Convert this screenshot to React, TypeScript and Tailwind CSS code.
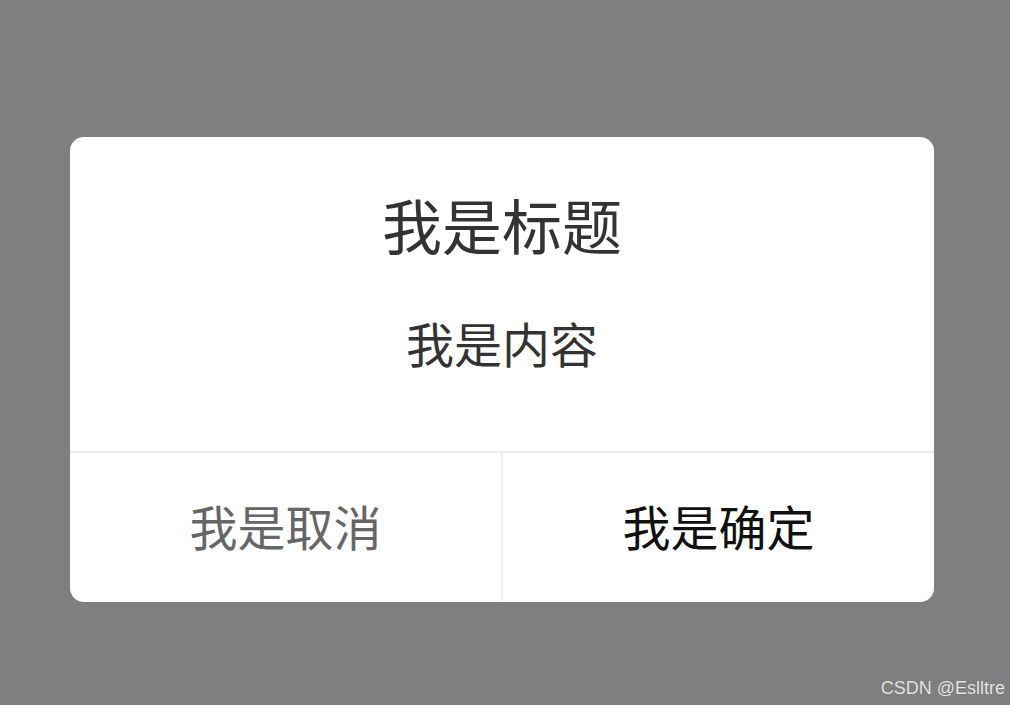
import React from 'react'

const cjk = { fontFamily: '"Noto Sans CJK SC", "Noto Sans", sans-serif' }

export default function App() {
  return (
    <div className="relative w-[1010px] h-[705px] bg-[#807e81] overflow-hidden" style={cjk}>
      <div className="pl-[70px] pt-[137px]">
        <div className="w-[864px] bg-white rounded-[14px] overflow-hidden">
          {/* header + body */}
          <div className="h-[314px] flex flex-col items-center pt-[57px]">
            <h1 className="text-[60px] leading-none text-[#333333]">我是标题</h1>
            <p className="mt-[64px] text-[48px] leading-none text-[#333333]">我是内容</p>
          </div>
          {/* action buttons */}
          <div className="flex h-[151px] border-t-2 border-[#ededed]">
            <button className="flex-1 flex items-center justify-center pb-[5px] text-[48px] leading-none text-[#666666] border-r-2 border-[#ededed]">
              我是取消
            </button>
            <button className="flex-1 flex items-center justify-center pb-[5px] text-[48px] leading-none text-[#111111]">
              我是确定
            </button>
          </div>
        </div>
      </div>
      <span
        className="absolute right-[5px] bottom-[8px] text-[18px] leading-none text-[#e6e6e6]"
        style={{ fontFamily: '"Liberation Sans", Arial, sans-serif', textShadow: '0 0 1px rgba(0,0,0,0.3)' }}
      >
        CSDN @Eslltre
      </span>
    </div>
  )
}
